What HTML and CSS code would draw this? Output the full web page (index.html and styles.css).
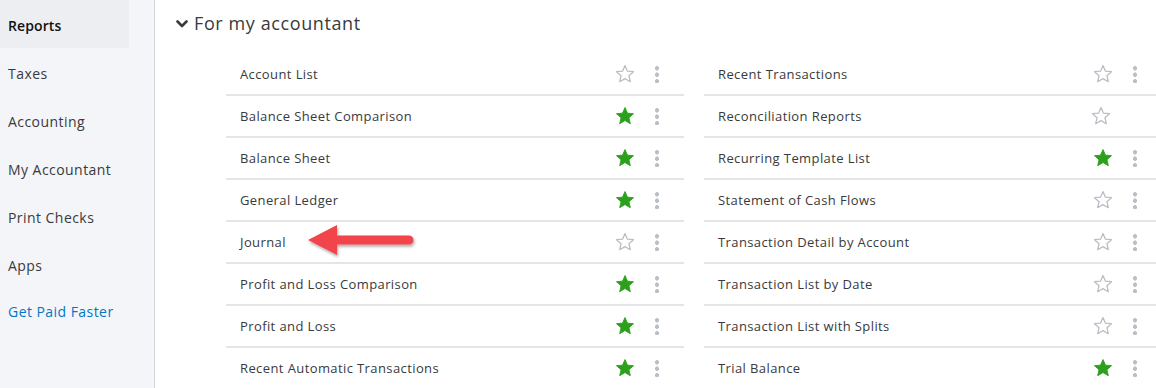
FILE: index.html
```html
<!DOCTYPE html>
<html>
<head>
<meta charset="utf-8">
<link rel="stylesheet" href="styles.css">
</head>
<body>
<aside class="sidebar">
  <div class="nav-item active">Reports</div>
  <div class="nav-item">Taxes</div>
  <div class="nav-item">Accounting</div>
  <div class="nav-item">My Accountant</div>
  <div class="nav-item">Print Checks</div>
  <div class="nav-item">Apps</div>
  <div class="nav-item link">Get Paid Faster</div>
</aside>
<main class="main">
  <h2 class="section-title">
    <svg class="chev" width="12" height="8" viewBox="0 0 12 8"><path d="M1.5 1.5 L6 6 L10.5 1.5" fill="none" stroke="#393a3d" stroke-width="2.6" stroke-linecap="round" stroke-linejoin="round"/></svg>
    For my accountant
  </h2>
  <div class="grid">
    <div class="col">
      <div class="row"><span class="label">Account List</span><span class="star off"></span><span class="dots"></span></div>
      <div class="row"><span class="label">Balance Sheet Comparison</span><span class="star on"></span><span class="dots"></span></div>
      <div class="row"><span class="label">Balance Sheet</span><span class="star on"></span><span class="dots"></span></div>
      <div class="row"><span class="label">General Ledger</span><span class="star on"></span><span class="dots"></span></div>
      <div class="row"><span class="label">Journal</span><span class="star off"></span><span class="dots"></span></div>
      <div class="row"><span class="label">Profit and Loss Comparison</span><span class="star on"></span><span class="dots"></span></div>
      <div class="row"><span class="label">Profit and Loss</span><span class="star on"></span><span class="dots"></span></div>
      <div class="row"><span class="label">Recent Automatic Transactions</span><span class="star on"></span><span class="dots"></span></div>
    </div>
    <div class="col">
      <div class="row"><span class="label">Recent Transactions</span><span class="star off"></span><span class="dots"></span></div>
      <div class="row"><span class="label">Reconciliation Reports</span><span class="star off nodots"></span></div>
      <div class="row"><span class="label">Recurring Template List</span><span class="star on"></span><span class="dots"></span></div>
      <div class="row"><span class="label">Statement of Cash Flows</span><span class="star off"></span><span class="dots"></span></div>
      <div class="row"><span class="label">Transaction Detail by Account</span><span class="star off"></span><span class="dots"></span></div>
      <div class="row"><span class="label">Transaction List by Date</span><span class="star off"></span><span class="dots"></span></div>
      <div class="row"><span class="label">Transaction List with Splits</span><span class="star off"></span><span class="dots"></span></div>
      <div class="row"><span class="label">Trial Balance</span><span class="star on"></span><span class="dots"></span></div>
    </div>
  </div>
  <svg class="arrow" width="120" height="44" viewBox="0 0 120 44">
    <defs>
      <filter id="sh" x="-20%" y="-40%" width="140%" height="180%">
        <feDropShadow dx="1" dy="2" stdDeviation="1.6" flood-color="#000" flood-opacity="0.35"/>
      </filter>
    </defs>
    <g filter="url(#sh)">
      <path d="M8 18 L37 3 L37 13.5 L109 13.5 A4.5 4.5 0 0 1 109 22.5 L37 22.5 L37 33 Z" fill="#f2454b"/>
    </g>
  </svg>
</main>
</body>
</html>
```
FILE: styles.css
```css
html, body {
  margin: 0;
  padding: 0;
}
body {
  width: 1156px;
  height: 388px;
  overflow: hidden;
  display: flex;
  font-family: "Open Sans", "Liberation Sans", sans-serif;
  color: #393a3d;
  background: #fff;
}
.sidebar {
  width: 154px;
  flex: none;
  background: #f4f5f8;
  border-right: 1px solid #d4d7dc;
  display: flex;
  flex-direction: column;
}
.nav-item {
  width: 129px;
  height: 48px;
  line-height: 51px;
  overflow: hidden;
  padding-left: 8px;
  box-sizing: border-box;
  font-size: 14px;
  letter-spacing: 0.45px;
  color: #393a3d;
}
.nav-item.active {
  background: #eceef1;
  font-weight: 600;
  letter-spacing: 0.1px;
  color: #111;
}
.nav-item.link {
  color: #0077c5;
  height: 44px;
  line-height: 47px;
}
.main {
  flex: 1;
  position: relative;
  padding-left: 21px;
}
.section-title {
  margin: 0;
  height: 46px;
  display: flex;
  align-items: center;
  gap: 6px;
  font-size: 18px;
  font-weight: 400;
  color: #393a3d;
  letter-spacing: 0.6px;
}
.chev {
  display: block;
  margin-top: 1px;
}
.grid {
  margin-top: 8px;
  margin-left: 50px;
  display: grid;
  grid-template-columns: 458px 458px;
  column-gap: 20px;
}
.row {
  height: 40px;
  border-bottom: 2px solid #e3e5e8;
  display: flex;
  align-items: center;
  padding-left: 14px;
}
.label {
  flex: 1;
  font-size: 13px;
  letter-spacing: 0.4px;
  color: #393a3d;
}
.star {
  width: 22px;
  height: 22px;
  margin-right: 19px;
  background-repeat: no-repeat;
  background-position: center;
  background-size: 22px 22px;
}
.star.off {
  background-image: url("data:image/svg+xml,%3Csvg xmlns='http://www.w3.org/2000/svg' viewBox='0 0 24 24'%3E%3Cpolygon points='12,2.8 14.7,8.9 21.3,9.5 16.3,13.9 17.8,20.4 12,17 6.2,20.4 7.7,13.9 2.7,9.5 9.3,8.9' fill='none' stroke='%23babec5' stroke-width='1.4' stroke-linejoin='round'/%3E%3C/svg%3E");
}
.star.on {
  background-image: url("data:image/svg+xml,%3Csvg xmlns='http://www.w3.org/2000/svg' viewBox='0 0 24 24'%3E%3Cpolygon points='12,2.8 14.7,8.9 21.3,9.5 16.3,13.9 17.8,20.4 12,17 6.2,20.4 7.7,13.9 2.7,9.5 9.3,8.9' fill='%232ca01c' stroke='%232ca01c' stroke-width='1' stroke-linejoin='round'/%3E%3C/svg%3E");
}
.star.nodots {
  margin-right: 50px;
}
.dots {
  width: 4px;
  height: 18px;
  margin-right: 25px;
  background-image: radial-gradient(circle, #babec5 1.9px, transparent 2.2px);
  background-size: 4px 6.5px;
  background-repeat: repeat-y;
}
.arrow {
  position: absolute;
  left: 145px;
  top: 222px;
}
```
